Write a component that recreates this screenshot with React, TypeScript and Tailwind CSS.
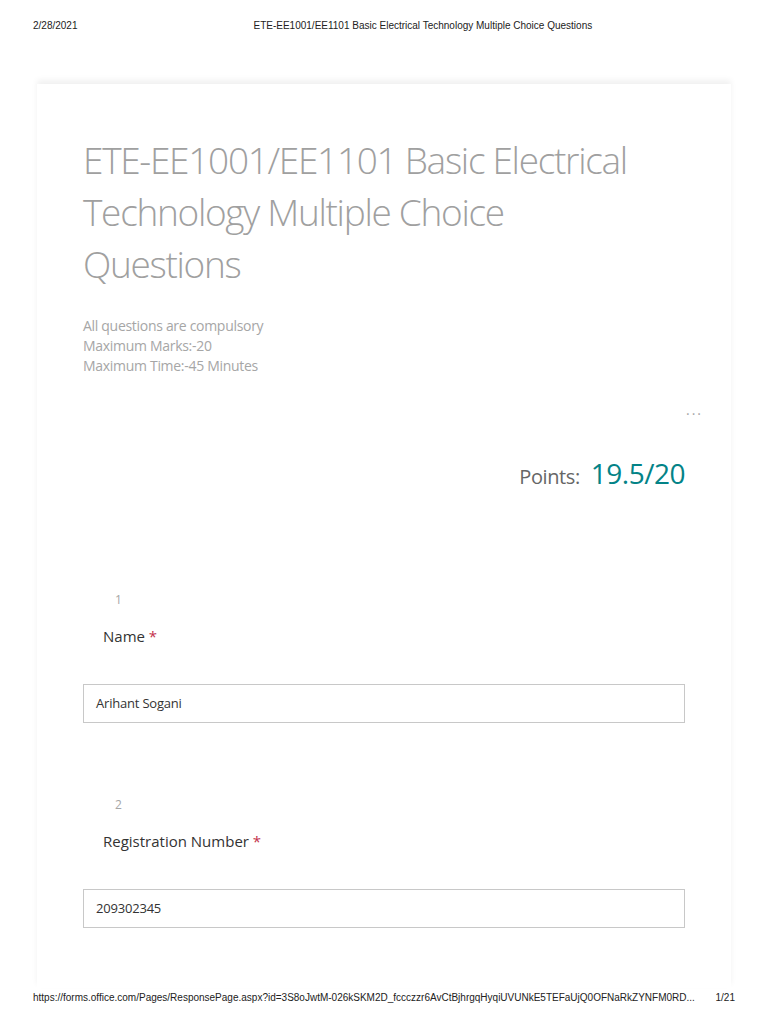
const questions = [
  { num: 1, label: 'Name', answer: 'Arihant Sogani' },
  { num: 2, label: 'Registration Number', answer: '209302345' },
];

function Question({ num, label, answer }: { num: number; label: string; answer: string }) {
  return (
    <div className="flex flex-col">
      <div className="pl-[32px] text-[12px] leading-[16px] text-[#a6a6a6]">{num}</div>
      <div className="mt-[17px] pl-[20px] text-[15px] leading-[22px] text-[#333333]">
        {label} <span className="text-[#c4314b]">*</span>
      </div>
      <div className="mt-[37px] flex h-[39px] items-center border border-[#c8c8c8] px-[12px] text-[13px] tracking-[-0.2px] text-[#333333]">
        {answer}
      </div>
    </div>
  );
}

export default function App() {
  return (
    <div className="flex min-h-[1024px] w-[768px] flex-col bg-white">
      {/* print header */}
      <div className="flex h-[50px] items-center whitespace-nowrap pl-[33px] font-['Liberation_Sans',Arial,sans-serif] text-[10px] text-[#222222]">
        <span>2/28/2021</span>
        <span className="ml-[176px]">ETE-EE1001/EE1101 Basic Electrical Technology Multiple Choice Questions</span>
      </div>

      {/* form card */}
      <div className="mx-[37px] mt-[34px] h-[904px] bg-white font-['Open_Sans','Noto_Sans',sans-serif] shadow-[0_-4px_6px_rgba(0,0,0,0.06)]">
        <div className="px-[46px] pt-[50px]">
          <h1 className="max-w-[580px] text-[37px] leading-[52px] font-light tracking-[-1.3px] text-[#a0a0a0]">
            ETE-EE1001/EE1101 Basic Electrical Technology Multiple Choice Questions
          </h1>
          <div className="mt-[26px] text-[14px] leading-[20px] tracking-[-0.3px] text-[#a6a6a6]">
            <p>All questions are compulsory</p>
            <p>Maximum Marks:-20</p>
            <p>Maximum Time:-45 Minutes</p>
          </div>

          <div className="mt-[28px] flex justify-end">
            <span className="mr-[-18px] text-[14px] leading-[20px] tracking-[2px] text-[#a6a6a6]">···</span>
          </div>

          <div className="mt-[28px] flex items-baseline justify-end gap-[11px]">
            <span className="text-[20px] tracking-[-0.4px] text-[#666666]">Points:</span>
            <span className="text-[28px] tracking-[-0.5px] text-[#038387]">19.5/20</span>
          </div>

          <div className="mt-[98px] flex flex-col gap-[74px]">
            {questions.map((q) => (
              <Question key={q.num} {...q} />
            ))}
          </div>
        </div>
      </div>

      {/* print footer */}
      <div className="flex h-[55px] items-start justify-between whitespace-nowrap pl-[33px] pr-[33px] pt-[2px] font-['Liberation_Sans',Arial,sans-serif] text-[10px] text-[#222222]">
        <span>
          https://forms.office.com/Pages/ResponsePage.aspx?id=3S8oJwtM-026kSKM2D_fccczzr6AvCtBjhrgqHyqiUVUNkE5TEFaUjQ0OFNaRkZYNFM0RD...
        </span>
        <span>1/21</span>
      </div>
    </div>
  );
}
